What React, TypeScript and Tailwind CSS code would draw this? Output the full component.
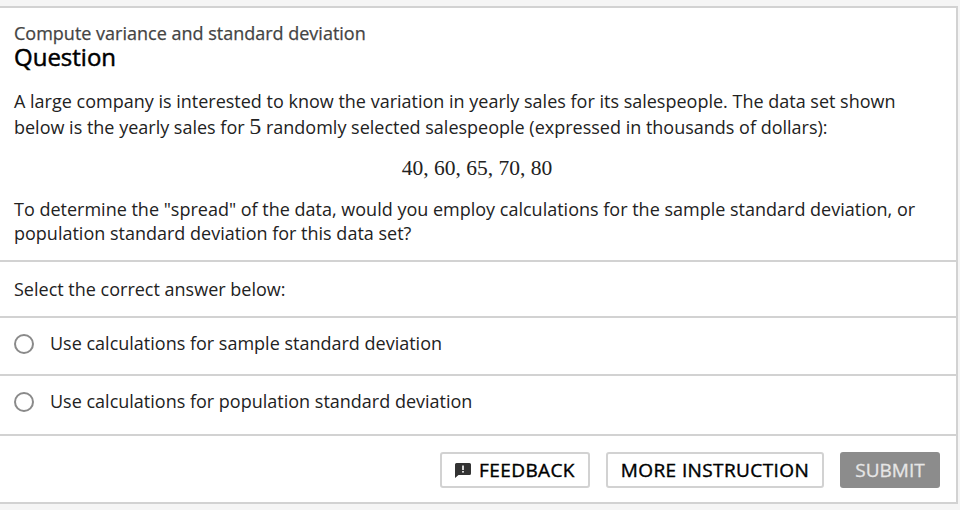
import React from "react";

function Option({ label, last }: { label: string; last?: boolean }) {
  return (
    <div
      className={`flex items-center gap-4 border-b-2 border-[#d2d2d2] pl-[14px] ${
        last ? "h-[60px] pb-[7px]" : "h-[58px] pb-[5px]"
      }`}
    >
      <span className="h-5 w-5 rounded-full border-2 border-[#8a8a8a] bg-white" />
      <span className="text-[18px] text-[#222]">{label}</span>
    </div>
  );
}

export default function App() {
  return (
    <div className="h-[510px] w-[960px] bg-[#f5f5f5] pt-[6px] font-['Open_Sans',sans-serif]">
      <div className="h-[498px] w-[958px] border-y-2 border-r-2 border-[#d2d2d2] bg-white">
        <div className="h-[254px] border-b-2 border-[#d2d2d2] pr-[16px] pl-[14px] pt-[14px] text-[#222]">
          <p className="text-[18px] leading-[22px] text-[#444] [-webkit-text-stroke:0.25px_#444]">
            Compute variance and standard deviation
          </p>
          <h1 className="text-[24px] leading-[26px] text-black [-webkit-text-stroke:0.5px_#000]">Question</h1>
          <p className="mt-[18px] text-[18px] leading-[26px]">
            A large company is interested to know the variation in yearly sales for its salespeople. The data set shown
            <br />
            below is the yearly sales for <span className="font-['Liberation_Serif',serif] text-[24px] leading-none">5</span> randomly selected salespeople (expressed in thousands of dollars):
          </p>
          <p className="mt-[15px] text-center font-['Liberation_Serif',serif] text-[21.5px] leading-[26px]">40, 60, 65, 70, 80</p>
          <p className="mt-[16px] text-[18px] leading-[24px]">
            To determine the "spread" of the data, would you employ calculations for the sample standard deviation, or
            population standard deviation for this data set?
          </p>
        </div>
        <div className="flex h-[56px] items-center border-b-2 border-[#d2d2d2] pl-[14px] text-[18px] text-[#222]">
          Select the correct answer below:
        </div>
        <Option label="Use calculations for sample standard deviation" />
        <Option label="Use calculations for population standard deviation" last />
        <div className="flex h-[66px] items-center justify-end gap-4 pt-[2px] pr-[16px]">
          <button className="flex h-9 w-[150px] items-center justify-center gap-2 rounded-[3px] border-2 border-[#d2d2d2] bg-white text-[19px] tracking-[0.4px] text-black [-webkit-text-stroke:0.4px_#000]">
            <svg width="16" height="15" viewBox="0 0 16 15">
              <path d="M1.5 0h13A1.5 1.5 0 0 1 16 1.5v9a1.5 1.5 0 0 1-1.5 1.5H3.5L0 15V1.5A1.5 1.5 0 0 1 1.5 0z" fill="#333" stroke="none" />
              <rect x="7.2" y="2.5" width="1.6" height="4.5" fill="#fff" />
              <rect x="7.2" y="8" width="1.6" height="1.6" fill="#fff" />
            </svg>
            FEEDBACK
          </button>
          <button className="h-9 w-[218px] rounded-[3px] border-2 border-[#d2d2d2] bg-white text-[19px] tracking-[0.4px] text-black [-webkit-text-stroke:0.4px_#000]">
            MORE INSTRUCTION
          </button>
          <button className="h-9 w-[100px] rounded-[3px] bg-[#8c8c8c] text-[19px] text-[#e6e6e6] [-webkit-text-stroke:0.3px_#e6e6e6]">
            SUBMIT
          </button>
        </div>
      </div>
    </div>
  );
}
